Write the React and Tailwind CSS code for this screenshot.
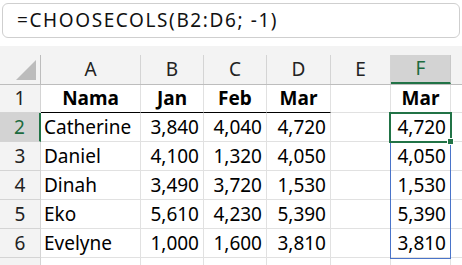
import React from "react";

const cols = ["A", "B", "C", "D", "E", "F"];
const widths = ["w-[41px]", "w-[100px]", "w-[63px]", "w-[63px]", "w-[64px]", "w-[60px]", "w-[60px]", "flex-1"];

const data = [
  ["Catherine", "3,840", "4,040", "4,720", "", "4,720"],
  ["Daniel", "4,100", "1,320", "4,050", "", "4,050"],
  ["Dinah", "3,490", "3,720", "1,530", "", "1,530"],
  ["Eko", "5,610", "4,230", "5,390", "", "5,390"],
  ["Evelyne", "1,000", "1,600", "3,810", "", "3,810"],
];

export default function App() {
  return (
    <div className="w-[462px] h-[265px] overflow-hidden bg-white text-black" style={{ fontFamily: '"Noto Sans", sans-serif' }}>
      <div className="pt-[3px] px-[2px]">
        <div className="h-[35px] border border-[#cfcfcf] rounded-[6px] flex items-center pl-[14px] text-[19px] tracking-[1.6px] text-[#111]">
          =CHOOSECOLS(B2:D6; -1)
        </div>
      </div>
      <div className="h-[8px]" />
      <div className="h-[9px] bg-[#f3f3f3]" />
      {/* header row */}
      <div className="flex h-[30px] bg-[#f3f3f3] border-b border-[#bdbdbd]">
        <div className={`${widths[0]} shrink-0 border-r border-[#bdbdbd] relative`}>
          <svg width="41" height="29" className="absolute left-0 top-0">
            <polygon points="36,5 36,25 16,25" fill="#bcbcbc" />
          </svg>
        </div>
        {cols.map((c, i) =>
          c === "F" ? (
            <div key={c} className={`${widths[i + 1]} shrink-0 bg-[#d3d3d3] border-r border-[#c8c8c8] border-b-2 border-b-[#217346] flex items-center justify-center text-[19px] text-[#1c6b3f]`}>
              {c}
            </div>
          ) : (
            <div key={c} className={`${widths[i + 1]} shrink-0 border-r border-[#d4d4d4] flex items-center justify-center text-[19px] text-[#222]`}>
              {c}
            </div>
          )
        )}
        <div className="flex-1" />
      </div>
      <div className="relative">
        {/* row 1 */}
        <div className="flex h-[28px]">
          <div className={`${widths[0]} shrink-0 bg-[#f3f3f3] border-r border-b border-[#d4d4d4] flex items-center justify-center text-[19px] text-[#222]`}>1</div>
          {["Nama", "Jan", "Feb", "Mar"].map((t, i) => (
            <div key={t} className={`${widths[i + 1]} shrink-0 border-r border-[#e1e1e1] border-b border-b-black flex items-center justify-center text-[19px] font-bold`}>
              {t}
            </div>
          ))}
          <div className={`${widths[5]} shrink-0 border-r border-b border-[#e1e1e1]`} />
          <div className={`${widths[6]} shrink-0 border-r border-b border-[#e1e1e1] flex items-center justify-center text-[19px] font-bold`}>Mar</div>
          <div className="flex-1 border-b border-[#e1e1e1]" />
        </div>
        {data.map((row, r) => (
          <div key={r} className="flex h-[29px]">
            {r === 0 ? (
              <div className={`${widths[0]} shrink-0 bg-[#d3d3d3] border-b border-[#d4d4d4] border-r-2 border-r-[#217346] flex items-center justify-center text-[19px] text-[#1c6b3f]`}>2</div>
            ) : (
              <div className={`${widths[0]} shrink-0 bg-[#f3f3f3] border-r border-b border-[#d4d4d4] flex items-center justify-center text-[19px] text-[#222]`}>{r + 2}</div>
            )}
            {row.map((v, i) => (
              <div
                key={i}
                className={`${widths[i + 1]} shrink-0 border-r border-b border-[#e1e1e1] flex items-center text-[19px] ${i === 0 ? "justify-start pl-[3px]" : "justify-end pr-[4px]"}`}
              >
                {v}
              </div>
            ))}
            <div className="flex-1 border-b border-[#e1e1e1]" />
          </div>
        ))}
        <div className="flex h-[10px]">
          <div className={`${widths[0]} shrink-0 bg-[#f3f3f3] border-r border-[#d4d4d4]`} />
          {[1, 2, 3, 4, 5, 6].map((i) => (
            <div key={i} className={`${widths[i]} shrink-0 border-r border-[#e1e1e1]`} />
          ))}
        </div>
        {/* spill range outline */}
        <div className="absolute left-[390px] top-[28px] w-[61px] h-[146px] border border-[#4a74c9] pointer-events-none" />
        {/* active cell */}
        <div className="absolute left-[389px] top-[27px] w-[63px] h-[31px] border-2 border-[#217346] pointer-events-none" />
        <div className="absolute left-[447px] top-[53px] w-[7px] h-[7px] bg-[#217346] border border-white pointer-events-none" />
      </div>
    </div>
  );
}
